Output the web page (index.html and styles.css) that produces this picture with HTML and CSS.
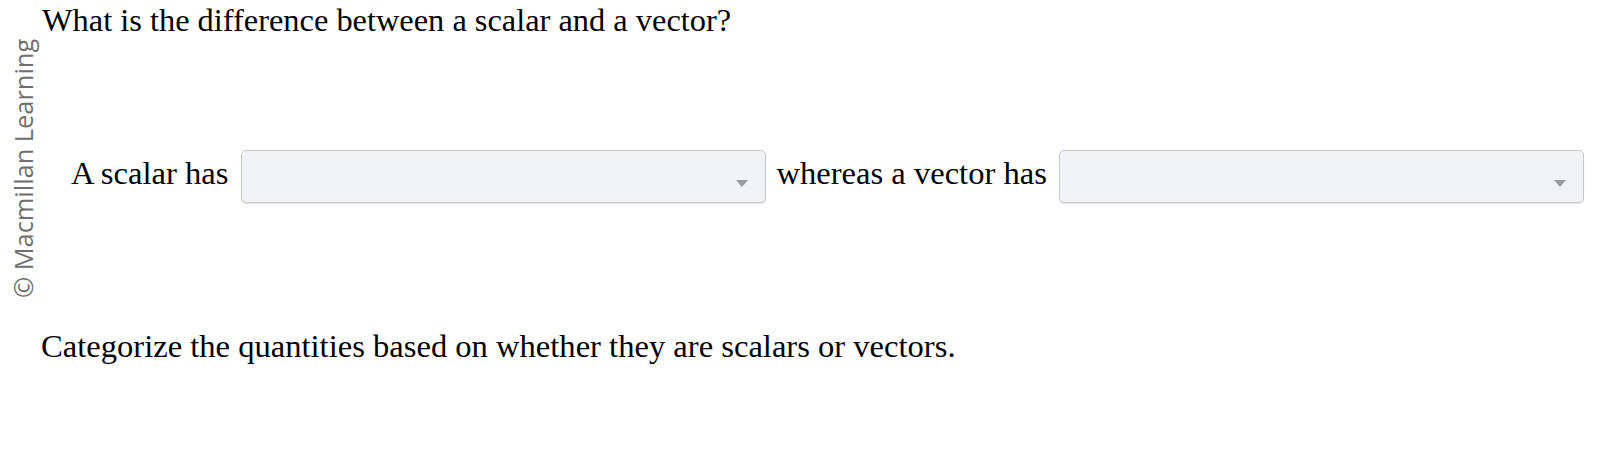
FILE: index.html
```html
<!DOCTYPE html>
<html lang="en">
<head>
<meta charset="utf-8">
<title>Scalar vs vector</title>
<link rel="stylesheet" href="styles.css">
</head>
<body>
<div class="question">
  <div class="watermark">© Macmillan Learning</div>
  <h1 class="prompt">What is the difference between a scalar and a vector?</h1>
  <div class="answer-row">
    <span class="label label-lead">A scalar has</span>
    <div class="dropdown" role="combobox" aria-label="A scalar has">
      <svg class="caret" width="12" height="7" viewBox="0 0 12 7"><path d="M0 0H12L6 7Z"/></svg>
    </div>
    <span class="label label-mid">whereas a vector has</span>
    <div class="dropdown" role="combobox" aria-label="whereas a vector has">
      <svg class="caret" width="12" height="7" viewBox="0 0 12 7"><path d="M0 0H12L6 7Z"/></svg>
    </div>
  </div>
  <p class="instruction">Categorize the quantities based on whether they are scalars or vectors.</p>
</div>
</body>
</html>
```

FILE: styles.css
```css
html, body {
  margin: 0;
  padding: 0;
  background: #ffffff;
}

.question {
  padding: 2px 0 0 41px;
  font-family: "Liberation Serif", "Times New Roman", serif;
  font-size: 32.6px;
  line-height: 36px;
  color: #000000;
}

.prompt {
  margin: 0 0 0 1px;
  font-size: 32.4px;
  font-weight: normal;
  line-height: 36px;
}

.watermark {
  position: absolute;
  left: 8px;
  top: 298px;
  transform: rotate(-90deg);
  transform-origin: top left;
  white-space: nowrap;
  font-family: "Open Sans", "DejaVu Sans", sans-serif;
  font-size: 25.4px;
  line-height: 30px;
  color: #6f6f6f;
}

.answer-row {
  display: flex;
  align-items: center;
  margin-top: 112px;
  padding-left: 30px;
}

.label {
  white-space: nowrap;
  padding-bottom: 7px;
}

.label-lead {
  margin-right: 13px;
}

.label-mid {
  margin: 0 12px 0 10px;
}

.dropdown {
  box-sizing: border-box;
  flex: none;
  width: 525px;
  height: 53px;
  background: #f2f3f7;
  border: 1px solid #c9c9cb;
  border-radius: 5px;
  box-shadow: 0 1px 1px rgba(0, 0, 0, 0.12);
  display: flex;
  justify-content: flex-end;
  align-items: flex-start;
  padding: 29px 17px 0 0;
}

.caret {
  display: block;
  fill: #9b9b9b;
}

.instruction {
  margin: 125px 0 0 0;
}
```
